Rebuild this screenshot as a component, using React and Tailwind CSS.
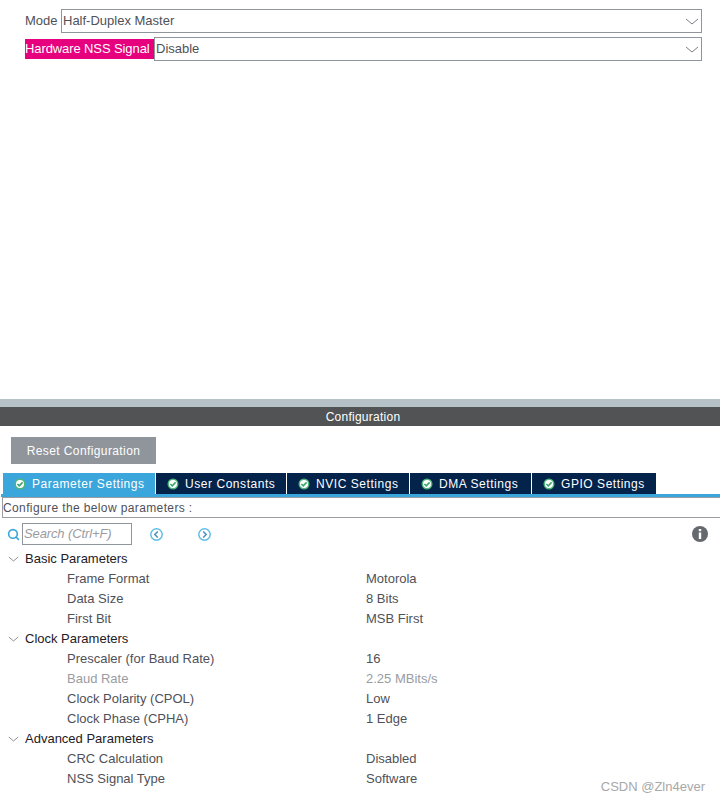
import { Search } from "lucide-react";

const tabs = [
    { label: "Parameter Settings", width: "w-[152px]", active: true },
    { label: "User Constants", width: "w-[130px]" },
    { label: "NVIC Settings", width: "w-[122px]" },
    { label: "DMA Settings", width: "w-[121px]" },
    { label: "GPIO Settings", width: "w-[124px]" },
];

const groups = [
    {
        title: "Basic Parameters",
        rows: [
            ["Frame Format", "Motorola"],
            ["Data Size", "8 Bits"],
            ["First Bit", "MSB First"],
        ],
    },
    {
        title: "Clock Parameters",
        rows: [
            ["Prescaler (for Baud Rate)", "16"],
            ["Baud Rate", "2.25 MBits/s", true],
            ["Clock Polarity (CPOL)", "Low"],
            ["Clock Phase (CPHA)", "1 Edge"],
        ],
    },
    {
        title: "Advanced Parameters",
        rows: [
            ["CRC Calculation", "Disabled"],
            ["NSS Signal Type", "Software"],
        ],
    },
];

const Chevron = ({ className }) => (
    <svg viewBox="0 0 14 7" className={className} fill="none" stroke="currentColor" strokeWidth="1">
        <path d="M1 1l6 5 6-5" />
    </svg>
);

const SelectBox = ({ value, className }) => (
    <div className={`h-6 flex items-center justify-between border border-[#8f959b] pl-[1px] pr-[2px] text-[#4f5159] ${className}`}>
        <span>{value}</span>
        <Chevron className="w-[14px] h-[7px] text-[#7a7f85]" />
    </div>
);

const CheckBadge = () => (
    <svg viewBox="0 0 12 12" className="w-3 h-3 shrink-0">
        <circle cx="6" cy="6" r="5.5" fill="#4fb57c" />
        <circle cx="6" cy="6" r="4" fill="#ffffff" />
        <path d="M3.4 6l1.9 1.9 3.3-3.5" fill="none" stroke="#3aa76a" strokeWidth="1.6" />
    </svg>
);

const NavButton = ({ d, className }) => (
    <svg viewBox="0 0 13 13" className={`w-[13px] h-[13px] ${className}`} fill="none">
        <circle cx="6.5" cy="6.5" r="5.7" stroke="#62bde8" strokeWidth="1.5" />
        <path d={d} stroke="#4d8fb5" strokeWidth="1.5" />
    </svg>
);

const InfoIcon = () => (
    <svg viewBox="0 0 16 16" className="w-4 h-4 ml-auto">
        <circle cx="8" cy="8" r="8" fill="#666a6e" />
        <rect x="6.8" y="3" width="2.4" height="2.2" fill="#ffffff" />
        <rect x="6.8" y="6.5" width="2.4" height="6.5" fill="#ffffff" />
    </svg>
);

const App = () => {
    return (
        <div className="w-[720px] h-[802px] relative overflow-hidden bg-white text-[13px] font-['Liberation_Sans',Arial,sans-serif]">
            {/* Mode selects */}
            <div className="h-[399px] pt-[9px] pl-[25px] pr-[18px]">
                <div className="flex items-center h-6 mb-[4px]">
                    <span className="w-[36px] text-[#4f5159]">Mode</span>
                    <SelectBox value="Half-Duplex Master" className="flex-1" />
                </div>
                <div className="flex items-center h-6">
                    <span className="w-[129px] h-[20px] leading-[20px] bg-[#e6007e] text-white whitespace-nowrap tracking-[-0.1px]">Hardware NSS Signal</span>
                    <SelectBox value="Disable" className="flex-1" />
                </div>
            </div>

            {/* Configuration header */}
            <div className="h-2 bg-[#b6c2c8]" />
            <div className="h-[19px] leading-[20px] pl-[6px] bg-[#515354] text-white text-center text-[12px] tracking-[0.25px]">Configuration</div>

            <div className="pl-[11px] pt-[11px]">
                <div className="w-[145px] h-[27px] flex items-center justify-center bg-[#8f959b] text-white text-[12px] tracking-[0.4px]">
                    Reset Configuration
                </div>
            </div>

            {/* Tabs */}
            <div className="flex gap-px pl-[3px] mt-[9px]">
                {tabs.map((t) => (
                    <div
                        key={t.label}
                        className={`${t.width} h-[21px] flex items-center gap-[6px] text-white text-[12px] tracking-[0.55px] whitespace-nowrap ${t.active ? "bg-[#3ba6dc] pl-[11px]" : "bg-[#03234b] pl-[11px]"}`}
                    >
                        <CheckBadge />
                        {t.label}
                    </div>
                ))}
            </div>
            <div className="h-[3px] ml-px bg-[#3ba6dc]" />
            <div className="h-[21px] ml-[2px] border-y border-l border-[#9a9ca3] leading-[20px] text-[#4f5159] text-[12px] tracking-[0.38px]">
                Configure the below parameters :
            </div>

            {/* Search row */}
            <div className="flex items-center h-[22px] mt-[5px] pl-[7px] pr-[12px]">
                <Search className="w-[13px] h-[13px] text-[#3ba6dc] mr-[2px]" strokeWidth={3} />
                <div className="w-[110px] h-[22px] border border-[#8f959b] pl-px leading-[20px] italic text-[#9a9ca3] tracking-[-0.12px]">Search (Ctrl+F)</div>
                <NavButton d="M7.8 3.5l-3 3 3 3" className="ml-[18px]" />
                <NavButton d="M5.2 3.5l3 3-3 3" className="ml-[35px]" />
                <InfoIcon />
            </div>

            {/* Parameter tree */}
            <div className="mt-[4px]">
                {groups.map((g) => (
                    <div key={g.title}>
                        <div className="h-5 flex items-center pl-[8px] text-[#1d2026]">
                            <Chevron className="w-[11px] h-[6px] text-[#6f7378] mr-[6px]" />
                            {g.title}
                        </div>
                        {g.rows.map(([name, value, muted]) => (
                            <div key={name} className={`h-5 flex items-center pl-[67px] ${muted ? "text-[#9a9ca3]" : "text-[#4f5159]"}`}>
                                <span className="w-[299px]">{name}</span>
                                <span>{value}</span>
                            </div>
                        ))}
                    </div>
                ))}
            </div>

            {/* watermark */}
            <div className="absolute right-[15px] bottom-[6px] text-[#a8a8a8]">CSDN @Zln4ever</div>
        </div>
    );
};

export default App;
